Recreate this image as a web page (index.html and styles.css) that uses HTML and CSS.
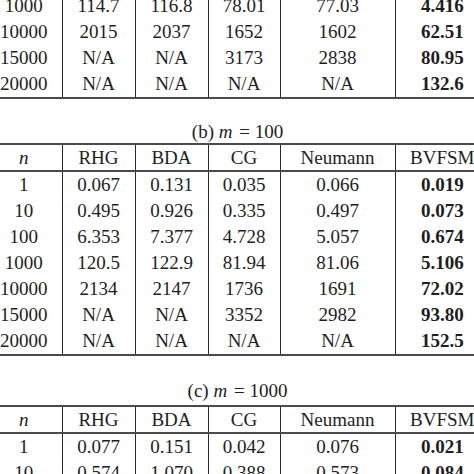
FILE: index.html
```html
<!DOCTYPE html>
<html lang="en">
<head>
  <meta charset="UTF-8">
  <meta name="viewport" content="width=device-width, initial-scale=1.0">
  <title>Runtime comparison tables</title>
  <link rel="stylesheet" href="styles.css">
</head>
<body>
  <div class="page">

    <!-- (a) tail of the first table -->
    <table class="results results-a">
      <colgroup>
        <col class="col-n"><col class="col-num"><col class="col-num"><col class="col-cg"><col class="col-neu"><col class="col-best">
      </colgroup>
      <tbody>
        <tr><td>1000</td><td>114.7</td><td>116.8</td><td>78.01</td><td>77.03</td><td class="best">4.416</td></tr>
        <tr><td>10000</td><td>2015</td><td>2037</td><td>1652</td><td>1602</td><td class="best">62.51</td></tr>
        <tr><td>15000</td><td>N/A</td><td>N/A</td><td>3173</td><td>2838</td><td class="best">80.95</td></tr>
        <tr class="last"><td>20000</td><td>N/A</td><td>N/A</td><td>N/A</td><td>N/A</td><td class="best">132.6</td></tr>
      </tbody>
    </table>

    <p class="caption caption-b">(b) <i>m</i> = 100</p>
    <table class="results">
      <colgroup>
        <col class="col-n"><col class="col-num"><col class="col-num"><col class="col-cg"><col class="col-neu"><col class="col-best">
      </colgroup>
      <thead>
        <tr><th><i>n</i></th><th>RHG</th><th>BDA</th><th>CG</th><th>Neumann</th><th>BVFSM</th></tr>
      </thead>
      <tbody>
        <tr><td>1</td><td>0.067</td><td>0.131</td><td>0.035</td><td>0.066</td><td class="best">0.019</td></tr>
        <tr><td>10</td><td>0.495</td><td>0.926</td><td>0.335</td><td>0.497</td><td class="best">0.073</td></tr>
        <tr><td>100</td><td>6.353</td><td>7.377</td><td>4.728</td><td>5.057</td><td class="best">0.674</td></tr>
        <tr><td>1000</td><td>120.5</td><td>122.9</td><td>81.94</td><td>81.06</td><td class="best">5.106</td></tr>
        <tr><td>10000</td><td>2134</td><td>2147</td><td>1736</td><td>1691</td><td class="best">72.02</td></tr>
        <tr><td>15000</td><td>N/A</td><td>N/A</td><td>3352</td><td>2982</td><td class="best">93.80</td></tr>
        <tr class="last"><td>20000</td><td>N/A</td><td>N/A</td><td>N/A</td><td>N/A</td><td class="best">152.5</td></tr>
      </tbody>
    </table>

    <p class="caption caption-c">(c) <i>m</i> = 1000</p>
    <table class="results">
      <colgroup>
        <col class="col-n"><col class="col-num"><col class="col-num"><col class="col-cg"><col class="col-neu"><col class="col-best">
      </colgroup>
      <thead>
        <tr><th><i>n</i></th><th>RHG</th><th>BDA</th><th>CG</th><th>Neumann</th><th>BVFSM</th></tr>
      </thead>
      <tbody>
        <tr><td>1</td><td>0.077</td><td>0.151</td><td>0.042</td><td>0.076</td><td class="best">0.021</td></tr>
        <tr><td>10</td><td>0.574</td><td>1.070</td><td>0.388</td><td>0.573</td><td class="best">0.084</td></tr>
      </tbody>
    </table>

  </div>
</body>
</html>
```

FILE: styles.css
```css
:root {
  --ink: #1e1e1e;
  --rule: #4a4a4a;
  --row-height: 26px;
}

html, body {
  margin: 0;
  background: #ffffff;
  overflow: hidden;
}

.page {
  width: 503px;
  margin-left: -14px;
  margin-top: -7px;
  font-family: "Liberation Serif", "Times New Roman", serif;
  font-size: 19px;
  color: var(--ink);
}

/* tables */
.results {
  width: 503px;
  table-layout: fixed;
  border-collapse: collapse;
}

.col-n { width: 76px; }
.col-num { width: 73px; }
.col-cg { width: 72px; }
.col-neu { width: 115px; }
.col-best { width: 94px; }

.results th,
.results td {
  padding: 0;
  text-align: center;
  font-weight: normal;
  line-height: 20px;
  white-space: nowrap;
}

.results td {
  height: var(--row-height);
}

.results th {
  height: 25px;
  border-top: 2px solid var(--rule);
  border-bottom: 2px solid var(--rule);
}

.results th + th,
.results td + td {
  border-left: 1px solid #2a2a2a;
}

.results tr.last td {
  border-bottom: 2px solid var(--rule);
}

.results td.best {
  font-weight: bold;
}

/* captions */
.caption {
  margin: 0;
  text-align: center;
  line-height: 20px;
  font-size: 19px;
}

.caption i {
  padding-right: 2px;
}

.caption-b {
  margin-top: 23px;
  margin-bottom: 1px;
}

.caption-c {
  margin-top: 25px;
  margin-bottom: 4px;
}
```
